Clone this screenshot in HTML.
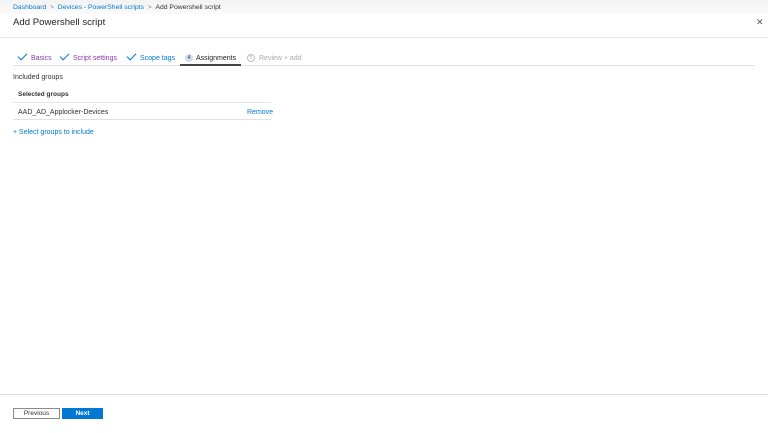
<!DOCTYPE html>
<html><head><style>
*{margin:0;padding:0;box-sizing:border-box}
body{width:768px;height:433px;background:#fff;font-family:"Liberation Sans",sans-serif;position:relative;overflow:hidden;color:#323130}
.a{position:absolute;white-space:nowrap}
.ck{display:inline-block;width:9px;height:5px;border-left:1.2px solid #0078d4;border-bottom:1.2px solid #0078d4;transform:rotate(-45deg);margin-right:4px;position:relative;top:-2px}
</style></head><body>
<div class="a" style="left:0;top:0;width:768px;height:14px;background:linear-gradient(#f3f3f3,#fafafa)"></div>
<div class="a" style="left:13px;top:4px;font-size:6.8px;color:#0078d4">Dashboard<span style="color:#888">&nbsp; &gt; &nbsp;</span>Devices - PowerShell scripts<span style="color:#888">&nbsp; &gt; &nbsp;</span><span style="color:#323130">Add Powershell script</span></div>
<div class="a" style="left:13px;top:17px;font-size:9.6px;color:#222">Add Powershell script</div>
<div class="a" style="left:756px;top:17px;font-size:9px;color:#555">✕</div>
<div class="a" style="left:0;top:37px;width:768px;height:1px;background:#e6e6e6"></div>
<div class="a" style="left:18px;top:55px;font-size:7px;color:#8a3aa8"><span class="ck"></span>Basics</div>
<div class="a" style="left:60px;top:55px;font-size:7px;color:#8a3aa8"><span class="ck"></span>Script settings</div>
<div class="a" style="left:127px;top:55px;font-size:7px;color:#0078d4"><span class="ck"></span>Scope tags</div>
<div class="a" style="left:185px;top:54px;width:8px;height:8px;border-radius:50%;background:#ccdff2;font-size:5px;text-align:center;line-height:8px;color:#333">4</div>
<div class="a" style="left:196px;top:55px;font-size:7px;color:#222">Assignments</div>
<div class="a" style="left:247px;top:54px;width:8px;height:8px;border-radius:50%;border:1px solid #bbb;font-size:5px;text-align:center;line-height:6px;color:#aaa">5</div>
<div class="a" style="left:259px;top:55px;font-size:7px;color:#aaa">Review + add</div>
<div class="a" style="left:13px;top:65px;width:742px;height:1px;background:#e1e1e1"></div>
<div class="a" style="left:180px;top:64px;width:61px;height:2px;background:#444"></div>
<div class="a" style="left:13px;top:74px;font-size:7px">Included groups</div>
<div class="a" style="left:18px;top:91px;font-size:6.5px;font-weight:bold">Selected groups</div>
<div class="a" style="left:13px;top:102px;width:258px;height:1px;background:#e6e6e6"></div>
<div class="a" style="left:18px;top:109px;font-size:7px">AAD_AD_Applocker-Devices</div>
<div class="a" style="left:247px;top:109px;font-size:7px;color:#0078d4">Remove</div>
<div class="a" style="left:13px;top:119px;width:258px;height:1px;background:#e1e1e1"></div>
<div class="a" style="left:13px;top:129px;font-size:7px;color:#0078d4">+ Select groups to include</div>
<div class="a" style="left:0;top:394px;width:768px;height:1px;background:#ddd"></div>
<div class="a" style="left:13px;top:408px;width:47px;height:11px;border:1px solid #8a8a8a;font-size:6.5px;text-align:center;line-height:9px">Previous</div>
<div class="a" style="left:62px;top:408px;width:41px;height:11px;background:#0078d4;color:#fff;font-size:6.5px;font-weight:bold;text-align:center;line-height:11px">Next</div>
</body></html>
